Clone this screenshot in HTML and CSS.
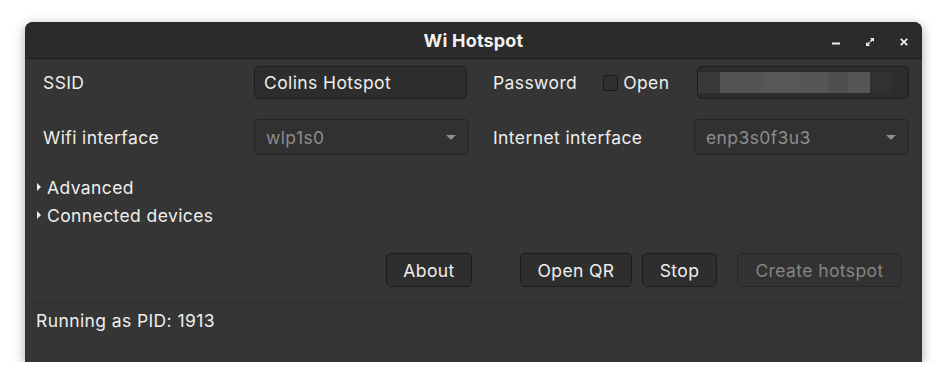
FILE: index.html
```html
<!DOCTYPE html>
<html lang="en">
<head>
  <meta charset="UTF-8" />
  <title>Wi Hotspot</title>
  <link rel="stylesheet" href="styles.css">
</head>
<body>
  <div class="window">
    <div class="titlebar">
      <span class="title">Wi Hotspot</span>
      <div class="controls">
        <svg width="8" height="8" viewBox="0 0 8 8"><rect x="0" y="4.5" width="8" height="2" fill="#eee"/></svg>
        <svg width="8" height="8" viewBox="0 0 8 8"><path d="M4 0h4v4L6.6 2.6 5 4.2 3.8 3 5.4 1.4zM4 8H0V4l1.4 1.4L3 3.8 4.2 5 2.6 6.6z" fill="#eee"/></svg>
        <svg width="8" height="8" viewBox="0 0 8 8"><path d="M0.8 0.8l6.4 6.4M7.2 0.8l-6.4 6.4" stroke="#eee" stroke-width="1.8"/></svg>
      </div>
    </div>

    <div class="content">
      <div class="form">
        <div class="row">
          <label class="lbl">SSID</label>
          <div class="entry">Colins Hotspot</div>
          <div class="lbl lbl2">Password <span class="check"><span class="box"></span>Open</span></div>
          <div class="entry pass">
            <span class="blur" style="background:#393939;width:22px"></span>
            <span class="blur" style="background:#545454;width:43px"></span>
            <span class="blur" style="background:#575757;width:43px"></span>
            <span class="blur" style="background:#555555;width:22px"></span>
            <span class="blur" style="background:#4f4f4f;width:20px"></span>
            <span class="blur" style="background:#565656;width:22px"></span>
            <span class="blur" style="background:#313131;width:21px"></span>
          </div>
        </div>
        <div class="row row-combo">
          <label class="lbl">Wifi interface</label>
          <div class="combo">wlp1s0<span class="caret"></span></div>
          <div class="lbl lbl2">Internet interface</div>
          <div class="combo">enp3s0f3u3<span class="caret"></span></div>
        </div>
      </div>

      <div class="sep sep-top"></div>

      <div class="expanders">
        <div class="expander"><span class="arrow"></span>Advanced</div>
        <div class="expander"><span class="arrow"></span>Connected devices</div>
      </div>

      <div class="actions">
        <button class="btn about">About</button>
        <button class="btn qr">Open QR</button>
        <button class="btn stop">Stop</button>
        <button class="btn create" disabled>Create hotspot</button>
      </div>

      <div class="sep"></div>

      <div class="status">Running as PID: 1913</div>
    </div>
  </div>
</body>
</html>
```

FILE: styles.css
```css
body {
  margin: 0;
  background: #ffffff;
  font-family: 'Inter', sans-serif;
  font-size: 17.5px;
  letter-spacing: 0.4px;
  color: #eeeeee;
}

.window {
  margin: 22px 0 0 25px;
  width: 897px;
  height: 340px;
  background: #353535;
  border-radius: 8px 8px 0 0;
  box-shadow: 0 3px 12px rgba(0,0,0,0.35);
  overflow: hidden;
}

.titlebar {
  height: 36px;
  background: #2b2b2b;
  border-bottom: 1px solid #1c1c1c;
  display: flex;
  align-items: center;
  justify-content: center;
  position: relative;
}

.title {
  font-weight: 700;
  font-size: 18px;
  letter-spacing: 0.2px;
  color: #f2f2f2;
}

.controls {
  position: absolute;
  right: 14px;
  top: 16px;
  display: flex;
  gap: 26px;
}

.controls svg {
  display: block;
}

.content {
  padding: 7px 13px 0 6px;
}

.form {
  padding-left: 12px;
}

.row {
  display: grid;
  grid-template-columns: 211px 215px 225px 215px;
  align-items: center;
  height: 33px;
}

.row-combo {
  margin-top: 20px;
  height: 36px;
}

.lbl2 {
  padding-left: 24px;
  display: flex;
  align-items: center;
}

.check {
  display: flex;
  align-items: center;
  margin-left: 26px;
}

.box {
  width: 13px;
  height: 14px;
  border: 1px solid #1a1a1a;
  border-radius: 3px;
  background: #2f2f2f;
  margin-right: 5px;
}

.entry {
  height: 33px;
  border: 1px solid #1e1e1e;
  border-radius: 5px;
  background: #2d2d2d;
  display: flex;
  align-items: center;
  padding-left: 9px;
  box-sizing: border-box;
  width: 213px;
}

.entry.pass {
  margin-left: 3px;
  width: 212px;
  padding-left: 0;
}

.blur {
  display: block;
  height: 21px;
}

.combo {
  height: 36px;
  border: 1px solid #232323;
  border-radius: 5px;
  background: #313131;
  color: #8d8d8d;
  display: flex;
  align-items: center;
  padding: 0 11px;
  justify-content: space-between;
  box-sizing: border-box;
}

.caret {
  width: 0;
  height: 0;
  border-left: 5px solid transparent;
  border-right: 5px solid transparent;
  border-top: 5px solid #8d8d8d;
  margin-right: 1px;
}

.sep {
  height: 1px;
  background: #2f2f2f;
}

.sep-top {
  margin-top: 15px;
}

.expanders {
  padding: 2px 0 0 6px;
}

.expander {
  display: flex;
  align-items: center;
  height: 28px;
}

.arrow {
  width: 0;
  height: 0;
  border-top: 4px solid transparent;
  border-bottom: 4px solid transparent;
  border-left: 4px solid #eeeeee;
  margin-right: 6px;
}

.actions {
  display: flex;
  height: 34px;
  margin: 24px 0 15px 0;
  padding-left: 355px;
}

.btn {
  font-family: 'Inter', sans-serif;
  font-size: 17.5px;
  letter-spacing: 0.4px;
  color: #eeeeee;
  background: #2e2e2e;
  border: 1px solid #1c1c1c;
  border-radius: 5px;
  height: 34px;
  padding: 0;
}

.about { width: 86px; }
.qr { width: 112px; margin-left: 48px; }
.stop { width: 75px; margin-left: 10px; }
.create { width: 165px; margin-left: 20px; color: #858585; background: #323232; border-color: #262626; }

.status {
  padding: 7px 0 0 5px;
  line-height: 22px;
}
```
